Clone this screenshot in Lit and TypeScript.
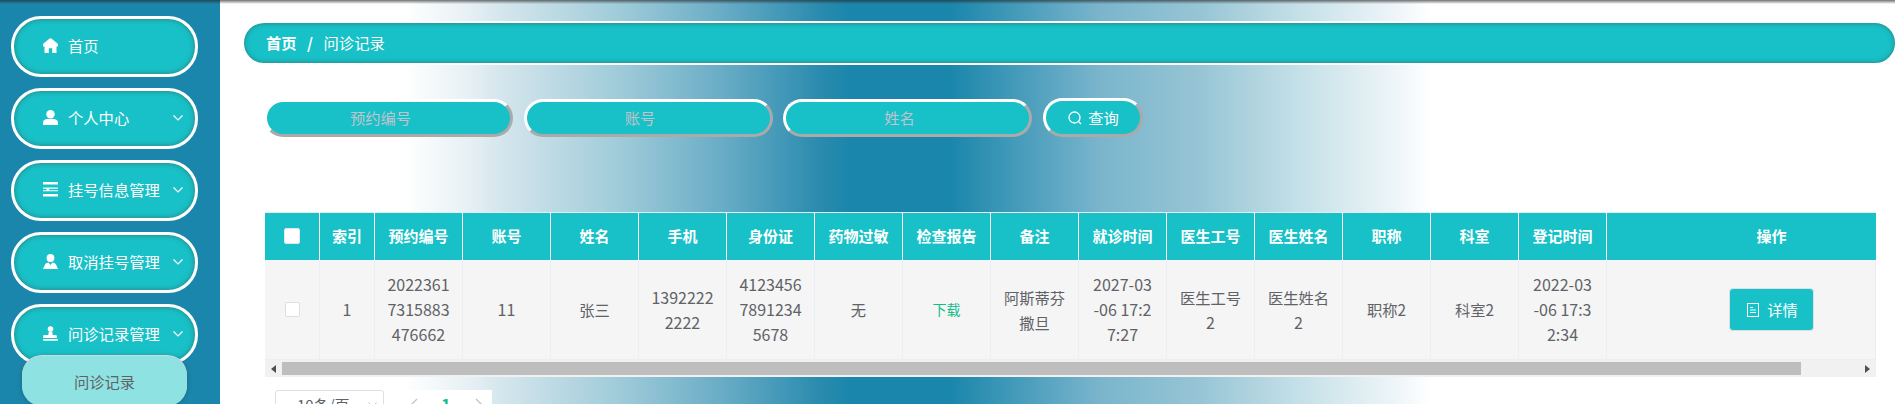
import { LitElement, html, css, svg } from "lit";
import { customElement } from "lit/decorators.js";

const ICONS: Record<string, unknown> = {
  home: svg`<path d="M7.500 .3C7.100 .3 6.700 .5 6.300 .8L.8 5.200C.3 5.600 0 6.100 0 6.700V8.500h1.500V15h4.300V10.300h3.400V15h4.300V8.500H15V6.700c0-.6-.3-1.100-.8-1.500L8.700 .8C8.300 .5 7.900 .3 7.500 .3Z"/>`,
  user: svg`<circle cx="7.500" cy="4.200" r="4.200"/><path d="M0 15v-2.600C0 10.300 2 9 4.200 9h6.600C13 9 15 10.300 15 12.400V15Z"/>`,
  list: svg`<path d="M0 0h15v2.600H0ZM0 5.600h15v1.200H6.200v1.400H15v1H0V8.200h4V6.800H0ZM0 12h15v2.600H0Z"/><path d="M3 7.500 5 6v3Z"/>`,
  cancel: svg`<circle cx="7.500" cy="4" r="3.900"/><path d="M0 15 2 10.400C3 9 4.400 8.800 5.600 8.600L7.500 11l1.900-2.400c1.200.2 2.600.4 3.600 1.800L15 15Z"/>`,
  stamp: svg`<circle cx="7.500" cy="3" r="2.800"/><path d="M5.800 5.500h3.400l.5 3.500h2.800c.8 0 1.300.5 1.300 1.200V12H.2v-1.800C.2 9.500.7 9 1.500 9h3.800ZM.2 13h14.600v1.700H.2Z"/>`,
};

const menuItems = [
  { icon: "home", label: "首页", arrow: false },
  { icon: "user", label: "个人中心", arrow: true },
  { icon: "list", label: "挂号信息管理", arrow: true },
  { icon: "cancel", label: "取消挂号管理", arrow: true },
  { icon: "stamp", label: "问诊记录管理", arrow: true },
];

const columns = [
  { title: "索引", lines: ["1"] },
  { title: "预约编号", lines: ["2022361", "7315883", "476662"] },
  { title: "账号", lines: ["11"] },
  { title: "姓名", lines: ["张三"] },
  { title: "手机", lines: ["1392222", "2222"] },
  { title: "身份证", lines: ["4123456", "7891234", "5678"] },
  { title: "药物过敏", lines: ["无"] },
  { title: "检查报告", lines: ["下载"], link: true },
  { title: "备注", lines: ["阿斯蒂芬", "撒旦"] },
  { title: "就诊时间", lines: ["2027-03", "-06 17:2", "7:27"] },
  { title: "医生工号", lines: ["医生工号", "2"] },
  { title: "医生姓名", lines: ["医生姓名", "2"] },
  { title: "职称", lines: ["职称2"] },
  { title: "科室", lines: ["科室2"] },
  { title: "登记时间", lines: ["2022-03", "-06 17:3", "2:34"] },
];

@customElement("app-root")
export class AppRoot extends LitElement {
  static styles = css`
    :host {
      display: block;
      position: relative;
      width: 100%;
      height: 404px;
      overflow: hidden;
      font-family: "Noto Sans CJK SC", "Noto Sans", sans-serif;
      font-size: 15.3px;
      color: #606266;
    }
    .shell { display: flex; height: 404px; }
    .topshade {
      position: absolute; left: 0; right: 0; top: 0; height: 4px;
      background: linear-gradient(to bottom, rgba(40,40,40,.65), rgba(40,40,40,0));
      z-index: 5;
    }
    .side {
      flex: 0 0 220px;
      box-sizing: border-box;
      background: #1a86ab;
      padding: 16px 22px 0 11px;
      display: flex;
      flex-direction: column;
      gap: 11px;
      overflow: hidden;
    }
    .item {
      flex: 0 0 61px;
      box-sizing: border-box;
      width: 187px;
      border: 3px solid #fff;
      border-radius: 30px;
      background: #17c1c7;
      box-shadow: inset 0 0 5px rgba(70,70,70,.6);
      color: #fff;
      display: flex;
      align-items: center;
      padding: 0 0 2px 29px;
      line-height: 1;
    }
    .item svg.ic { width: 15px; height: 15px; fill: #fff; flex: none; margin-right: 10px; }
    .item .label { flex: 1; white-space: nowrap; }
    .item .arrow { width: 10px; height: 6px; flex: none; margin-right: 12px; fill: none; stroke: #fff; stroke-width: 1.2; }
    .sub {
      flex: 0 0 50px;
      box-sizing: border-box;
      margin: -20px 0 0 11px;
      width: 165px;
      border-radius: 20px;
      background: #8fe2e2;
      box-shadow: 0 0 4px rgba(40,70,90,.5), 0 -1px 0 #fff;
      display: flex;
      align-items: center;
      justify-content: center;
      color: #606266;
      position: relative;
    }
    .main {
      flex: 1;
      min-width: 0;
      box-sizing: border-box;
      padding-top: 21px;
      display: flex;
      flex-direction: column;
      align-items: flex-start;
      background: linear-gradient(to right, #fff 184px, #e6f0f4 250px, #d5e6ed 281px, #9fcbd9 400px, #6aadc6 500px, #2a8bae 600px, #1a86ab 630px, #1a86ab 730px, #7ab5cc 880px, #97c5d5 980px, #c5e0e8 1080px, #f0f6f9 1180px, #fff 1210px);
      overflow: hidden;
    }
    .crumb {
      box-sizing: border-box;
      flex: none;
      width: 1655px;
      height: 44px;
      margin-left: 22px;
      border: 2px solid #fff;
      border-radius: 22px;
      background: #17c1c7;
      box-shadow: inset 0 0 5px rgba(70,70,70,.6);
      color: #fff;
      display: flex;
      align-items: center;
      padding: 0 0 1px 22px;
      line-height: 1;
    }
    .crumb b { font-weight: 700; }
    .crumb .sep { font-weight: 700; margin: 0 10.5px; }
    .search {
      flex: none;
      display: flex;
      gap: 10.5px;
      margin: 34px 0 0 44px;
    }
    .field {
      box-sizing: border-box;
      width: 249px;
      height: 38px;
      border-style: solid;
      border-width: 3px;
      border-color: #fff #aaa #aaa #fff;
      border-radius: 20px;
      background: #17c1c7;
      font: inherit;
      text-align: center;
      padding: 0 30px 2px 14px;
      outline: none;
      color: #fff;
    }
    .field::placeholder { color: #c0c4cc; opacity: 1; }
    .query {
      box-sizing: border-box;
      width: 100px;
      height: 39px;
      margin-top: -1px;
      border-style: solid;
      border-width: 3px;
      border-color: #fff #aaa #aaa #fff;
      border-radius: 20px;
      background: #17c1c7;
      color: #fff;
      font: inherit;
      line-height: 1;
      display: flex;
      align-items: center;
      justify-content: center;
      gap: 6px;
      padding: 0 0 0 2px;
    }
    .query svg { width: 14px; height: 14px; fill: none; stroke: #fff; stroke-width: 1.3; }
    .table {
      flex: none;
      width: 1611px;
      margin: 75px 0 0 45px;
      background: #f5f5f5;
    }
    .row { display: flex; }
    .row.head { height: 48px; background: #17c1c7; border-top: 1px solid #e6ebf0; box-sizing: border-box; }
    .row.body { height: 99px; }
    .cell {
      flex: 0 0 88px;
      box-sizing: border-box;
      display: flex;
      flex-direction: column;
      align-items: center;
      justify-content: center;
      line-height: 25px;
      white-space: nowrap;
    }
    .cell.narrow { flex-basis: 55px; }
    .cell.action { flex: 1; padding-left: 60px; }
    .head .cell { color: #fff; font-weight: 700; font-size: 15px; border-right: 1px solid #fff; line-height: 1; padding-bottom: 2px; }
    .head .cell.action { padding-left: 60px; }
    .head .cell:last-child { border-right: none; }
    .body .cell { border-right: 1px solid #ebeef5; }
    .num { font-size: 16px; }
    .link { color: #10bd8c; font-size: 14px; }
    .check {
      box-sizing: border-box;
      width: 15px; height: 15px;
      background: #fff;
      border: 1px solid #dcdfe6;
      border-radius: 2px;
      display: block;
    }
    .head .check { width: 16px; height: 16px; border-color: #e4e7ed; }
    .detail {
      box-sizing: border-box;
      width: 85px; height: 43px;
      background: #17c1c7;
      border: 1px solid #dcdfe6;
      border-radius: 4px;
      color: #fff;
      font: inherit;
      line-height: 1;
      display: flex;
      align-items: center;
      justify-content: center;
      gap: 8px;
      padding: 0 0 0 3px;
    }
    .detail svg { width: 12px; height: 14px; fill: none; stroke: #fff; stroke-width: 1; }
    .scroll {
      height: 18px;
      background: #f1f1f1;
      border-top: 1px solid #ebeef5;
      box-sizing: border-box;
      display: flex;
      align-items: center;
    }
    .scroll .btn { flex: none; width: 17px; display: flex; justify-content: center; }
    .scroll .btn svg { width: 5px; height: 8px; fill: #505050; }
    .thumb { flex: none; width: 1519px; height: 13px; background: #bebebe; }
    .gap { flex: 1; }
    .pager {
      flex: none;
      display: flex;
      margin: 13px 0 0 55px;
    }
    .size {
      box-sizing: border-box;
      width: 109px; height: 28px;
      background: #fff;
      border: 1px solid #dcdfe6;
      border-radius: 3px;
      display: flex;
      align-items: center;
      font-size: 15px;
      line-height: 1;
      padding-left: 21px;
      position: relative;
    }
    .size svg { position: absolute; right: 6px; top: 11px; width: 9px; height: 6px; fill: none; stroke: #c0c4cc; }
    .pages {
      box-sizing: border-box;
      width: 108px; height: 28px;
      padding-left: 14px;
      background: #fff;
      display: grid;
      grid-template-columns: 32px 32px 32px;
      align-items: center;
      justify-items: center;
    }
    .pages .prevnext { width: 7px; height: 12px; fill: none; stroke: #c0c4cc; stroke-width: 1.4; }
    .pages .cur { color: #10bd8c; font-weight: 700; font-size: 16px; line-height: 1; }
  `;

  render() {
    return html`
      <div class="topshade"></div>
      <div class="shell">
        <aside class="side">
          ${menuItems.map(
            (m) => html`<div class="item">
              <svg class="ic" viewBox="0 0 15 15">${ICONS[m.icon]}</svg>
              <span class="label">${m.label}</span>
              ${m.arrow
                ? html`<svg class="arrow" viewBox="0 0 10 6"><path d="M.5.5 5 5 9.500.5"/></svg>`
                : ""}
            </div>`
          )}
          <div class="sub">问诊记录</div>
        </aside>
        <main class="main">
          <div class="crumb"><b>首页</b><span class="sep">/</span><span>问诊记录</span></div>
          <div class="search">
            <input class="field" placeholder="预约编号" />
            <input class="field" placeholder="账号" />
            <input class="field" placeholder="姓名" />
            <button class="query">
              <svg viewBox="0 0 14 14"><circle cx="6.500" cy="6.500" r="5.500"/><path d="M10.500 10.500 13 13"/></svg>
              <span>查询</span>
            </button>
          </div>
          <div class="table">
            <div class="row head">
              <div class="cell narrow"><span class="check"></span></div>
              ${columns.map(
                (c, i) => html`<div class="cell ${i === 0 ? "narrow" : ""}">${c.title}</div>`
              )}
              <div class="cell action">操作</div>
            </div>
            <div class="row body">
              <div class="cell narrow"><span class="check"></span></div>
              ${columns.map(
                (c, i) => html`<div class="cell ${i === 0 ? "narrow" : ""}">
                  ${c.lines.map(
                    (l) => html`<span class=${c.link ? "link" : /^[-\d :]+$/.test(l) ? "num" : ""}>${l}</span>`
                  )}
                </div>`
              )}
              <div class="cell action">
                <button class="detail">
                  <svg viewBox="0 0 12 14"><rect x=".5" y=".5" width="11" height="13"/><path d="M3 4.500h3M3 7h6M3 9.500h6"/></svg>
                  <span>详情</span>
                </button>
              </div>
            </div>
            <div class="scroll">
              <span class="btn"><svg viewBox="0 0 5 8"><path d="M5 0v8L0 4Z"/></svg></span>
              <div class="thumb"></div>
              <div class="gap"></div>
              <span class="btn"><svg viewBox="0 0 5 8"><path d="M0 0v8l5-4Z"/></svg></span>
            </div>
          </div>
          <div class="pager">
            <div class="size">10条/页<svg viewBox="0 0 9 6"><path d="M.5.500 4.500 5 8.500.500"/></svg></div>
            <div class="pages">
              <svg class="prevnext" viewBox="0 0 7 12"><path d="M6 1 1 6l5 5"/></svg>
              <span class="cur">1</span>
              <svg class="prevnext" viewBox="0 0 7 12"><path d="M1 1l5 5-5 5"/></svg>
            </div>
          </div>
        </main>
      </div>
    `;
  }
}
